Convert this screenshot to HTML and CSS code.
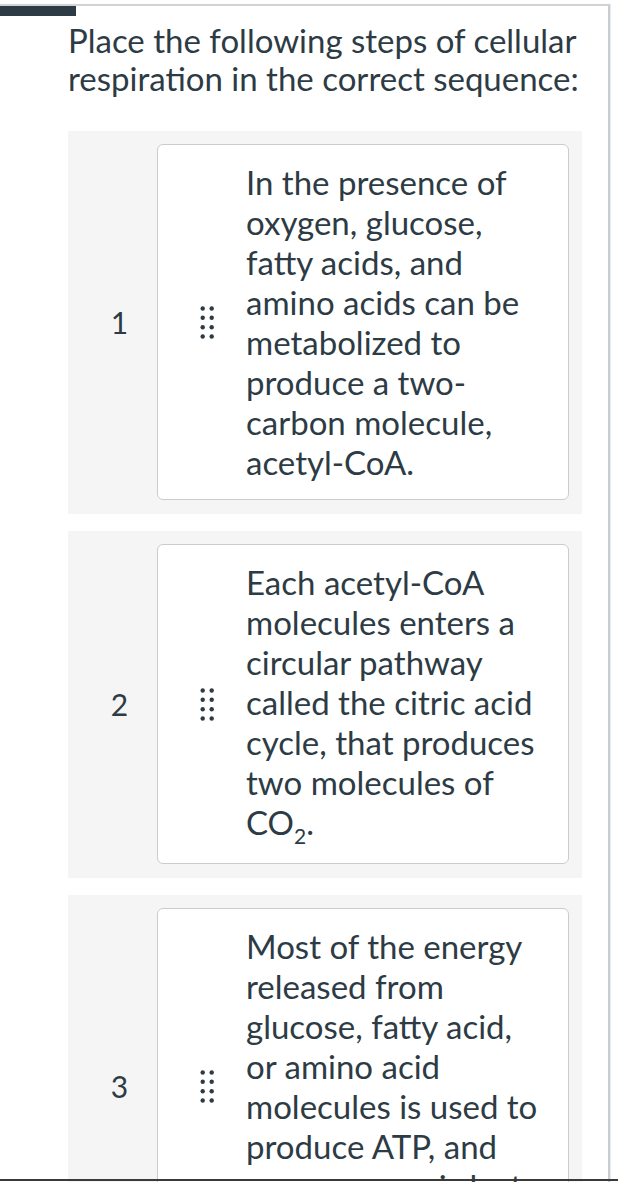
FILE: index.html
```html
<!DOCTYPE html>
<html lang="en">
<head>
<meta charset="utf-8">
<title>Ordering question</title>
<link rel="stylesheet" href="styles.css">
</head>
<body>
<div class="panel">
  <div class="tab-bar"></div>
  <h1 class="prompt">Place the following steps of cellular respiration in the correct sequence:</h1>
  <div class="list">
    <div class="row">
      <div class="num">1</div>
      <div class="card">
        <svg class="handle" width="14" height="33" viewBox="0 0 14 33" aria-hidden="true">
          <circle cx="2.7" cy="2.5" r="2.2"/><circle cx="11.7" cy="2.5" r="2.2"/>
          <circle cx="2.7" cy="11.8" r="2.2"/><circle cx="11.7" cy="11.8" r="2.2"/>
          <circle cx="2.7" cy="21.2" r="2.2"/><circle cx="11.7" cy="21.2" r="2.2"/>
          <circle cx="2.7" cy="30.5" r="2.2"/><circle cx="11.7" cy="30.5" r="2.2"/>
        </svg>
        <div class="text">In the presence of oxygen, glucose, fatty acids, and amino acids can be metabolized to produce a two-carbon molecule, acetyl-CoA.</div>
      </div>
    </div>
    <div class="row">
      <div class="num">2</div>
      <div class="card">
        <svg class="handle" width="14" height="33" viewBox="0 0 14 33" aria-hidden="true">
          <circle cx="2.7" cy="2.5" r="2.2"/><circle cx="11.7" cy="2.5" r="2.2"/>
          <circle cx="2.7" cy="11.8" r="2.2"/><circle cx="11.7" cy="11.8" r="2.2"/>
          <circle cx="2.7" cy="21.2" r="2.2"/><circle cx="11.7" cy="21.2" r="2.2"/>
          <circle cx="2.7" cy="30.5" r="2.2"/><circle cx="11.7" cy="30.5" r="2.2"/>
        </svg>
        <div class="text">Each acetyl-CoA molecules enters a circular pathway called the citric acid cycle, that produces two molecules of CO<sub>2</sub>.</div>
      </div>
    </div>
    <div class="row">
      <div class="num">3</div>
      <div class="card">
        <svg class="handle" width="14" height="33" viewBox="0 0 14 33" aria-hidden="true">
          <circle cx="2.7" cy="2.5" r="2.2"/><circle cx="11.7" cy="2.5" r="2.2"/>
          <circle cx="2.7" cy="11.8" r="2.2"/><circle cx="11.7" cy="11.8" r="2.2"/>
          <circle cx="2.7" cy="21.2" r="2.2"/><circle cx="11.7" cy="21.2" r="2.2"/>
          <circle cx="2.7" cy="30.5" r="2.2"/><circle cx="11.7" cy="30.5" r="2.2"/>
        </svg>
        <div class="text">Most of the energy released from glucose, fatty acid, or amino acid molecules is used to produce ATP, and some energy is lost as heat.</div>
      </div>
    </div>
  </div>
</div>
<div class="bottom-edge"></div>
</body>
</html>
```
FILE: styles.css
```css
html, body {
  margin: 0;
  padding: 0;
  background: #ffffff;
}
body {
  font-family: Lato, "Open Sans", sans-serif;
  color: #2d3b45;
  overflow: hidden;
}
.panel {
  margin-top: 4px;
  width: 608px;
  border-top: 2px solid #d0d4d7;
  border-right: 2px solid #c7cdd1;
  box-shadow: 1px 0 1px rgba(0, 0, 0, 0.08);
  min-height: 1300px;
}
.tab-bar {
  width: 76px;
  height: 10px;
  background: #2d3b45;
}
.prompt {
  margin: 5px 0 0 68px;
  font-size: 33px;
  line-height: 38px;
  font-weight: 400;
  width: 530px;
}
.list {
  margin: 34px 0 0 68px;
  width: 514px;
  display: flex;
  flex-direction: column;
  gap: 17px;
}
.row {
  display: flex;
  align-items: center;
  background: #f5f5f5;
  padding: 13px 13px 14px 0;
}
.num {
  flex: 0 0 75px;
  padding-left: 14px;
  text-align: center;
  font-size: 30px;
  line-height: 40px;
}
.card {
  flex: 1;
  display: flex;
  align-items: center;
  background: #ffffff;
  border: 1.5px solid #c7cdd1;
  border-radius: 6px;
  padding: 17px 24px 17px 42px;
}
.handle {
  flex: 0 0 14px;
  margin-right: 32px;
  fill: #2d3b45;
}
.text {
  flex: 1;
  font-size: 33px;
  line-height: 40px;
}
.text sub {
  font-size: 21px;
  line-height: 1;
  vertical-align: -9px;
}
.bottom-edge {
  position: fixed;
  left: 0;
  right: 0;
  bottom: 1px;
  height: 2px;
  background: #3a3a3a;
}
```
